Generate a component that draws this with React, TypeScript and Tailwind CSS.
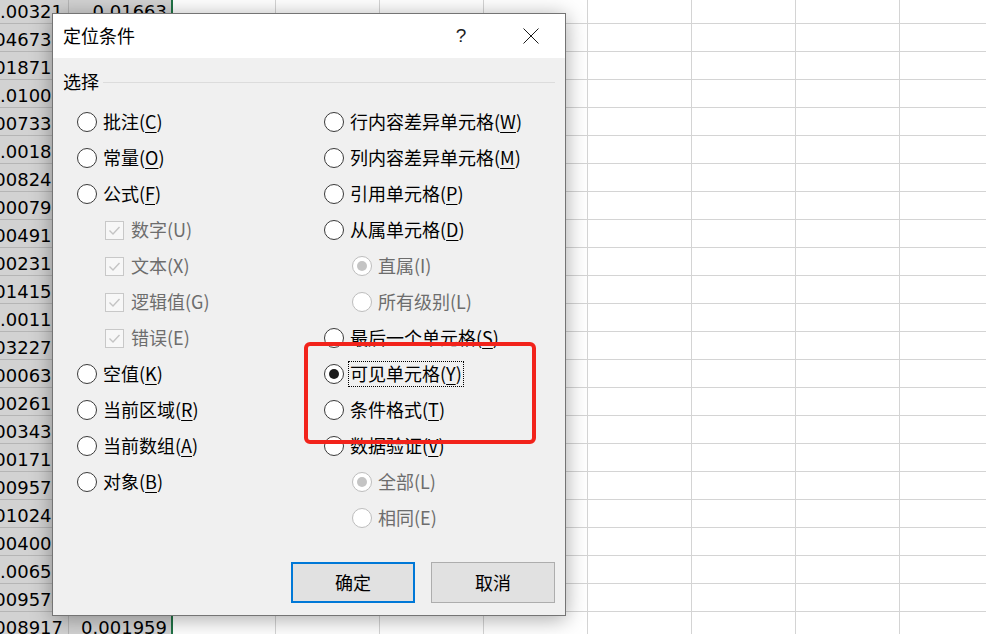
import React from "react";

// column A values (only the right part shows), column B only shows top/bottom rows
const colA = [
  "0.00321", "0.046731", "0.018712", "0.01004", "0.007331", "0.00186",
  "0.008242", "0.000794", "0.004912", "0.002318", "0.014157", "0.00112",
  "0.032271", "0.000631", "0.002615", "0.003433", "0.001719", "0.009572",
  "0.010248", "0.004006", "0.00653", "0.009574", "0.008917",
];
const colB: Record<number, string> = { 0: "0.01663", 22: "0.001959" };

const sheetFont = { fontFamily: '"DejaVu Sans", "Liberation Sans", sans-serif' };
const uiFont = { fontFamily: '"Noto Sans CJK SC", "Noto Sans", sans-serif' };

function Sheet() {
  return (
    <div className="-mt-[4px] flex flex-col text-[18px] text-black" style={sheetFont}>
      {colA.map((a, i) => (
        <div key={i} className="flex h-[28px] shrink-0">
          <div className="w-[69px] shrink-0 flex justify-end items-end overflow-hidden whitespace-nowrap border-r border-b border-[#b5b5b5] bg-[#d2d2d2] pr-[5px] leading-[22px]">
            {a}
          </div>
          <div className="w-[104px] shrink-0 flex justify-end items-end overflow-hidden whitespace-nowrap border-b border-[#b5b5b5] border-r-2 border-r-[#217346] bg-[#d2d2d2] pr-[4px] leading-[22px]">
            {colB[i] ?? ""}
          </div>
          <div className="w-[103px] shrink-0 border-r border-b border-[#d4d4d4]" />
          {[0, 1, 2, 3, 4, 5, 6].map((c) => (
            <div key={c} className="w-[104px] shrink-0 border-r border-b border-[#d4d4d4]" />
          ))}
        </div>
      ))}
    </div>
  );
}

type Item = {
  label: string;
  key?: string;
  kind: "radio" | "check";
  indent?: boolean;
  disabled?: boolean;
  checked?: boolean;
  focused?: boolean;
};

const leftItems: Item[] = [
  { label: "批注", key: "C", kind: "radio" },
  { label: "常量", key: "O", kind: "radio" },
  { label: "公式", key: "F", kind: "radio" },
  { label: "数字(U)", kind: "check", indent: true, disabled: true, checked: true },
  { label: "文本(X)", kind: "check", indent: true, disabled: true, checked: true },
  { label: "逻辑值(G)", kind: "check", indent: true, disabled: true, checked: true },
  { label: "错误(E)", kind: "check", indent: true, disabled: true, checked: true },
  { label: "空值", key: "K", kind: "radio" },
  { label: "当前区域", key: "R", kind: "radio" },
  { label: "当前数组", key: "A", kind: "radio" },
  { label: "对象", key: "B", kind: "radio" },
];

const rightItems: Item[] = [
  { label: "行内容差异单元格", key: "W", kind: "radio" },
  { label: "列内容差异单元格", key: "M", kind: "radio" },
  { label: "引用单元格", key: "P", kind: "radio" },
  { label: "从属单元格", key: "D", kind: "radio" },
  { label: "直属(I)", kind: "radio", indent: true, disabled: true, checked: true },
  { label: "所有级别(L)", kind: "radio", indent: true, disabled: true },
  { label: "最后一个单元格", key: "S", kind: "radio" },
  { label: "可见单元格", key: "Y", kind: "radio", checked: true, focused: true },
  { label: "条件格式", key: "T", kind: "radio" },
  { label: "数据验证", key: "V", kind: "radio" },
  { label: "全部(L)", kind: "radio", indent: true, disabled: true, checked: true },
  { label: "相同(E)", kind: "radio", indent: true, disabled: true },
];

function Radio({ checked, disabled }: { checked?: boolean; disabled?: boolean }) {
  return (
    <span
      className={
        "w-[20px] h-[20px] shrink-0 rounded-full bg-white flex items-center justify-center border " +
        (disabled ? "border-[#bdbdbd]" : "border-[#3a3a3a]")
      }
    >
      {checked && (
        <span className={"w-[10px] h-[10px] rounded-full " + (disabled ? "bg-[#c4c4c4]" : "bg-[#1b1b1b]")} />
      )}
    </span>
  );
}

function Check() {
  return (
    <span className="w-[19px] h-[19px] shrink-0 border border-[#c8c8c8] bg-[#f7f7f7] flex items-center justify-center">
      <svg width="15" height="15" viewBox="0 0 15 15">
        <path d="M2.5 7.5 L6 11 L12.5 4" fill="none" stroke="#c4c4c4" strokeWidth="1.4" />
      </svg>
    </span>
  );
}

function Row({ item }: { item: Item }) {
  return (
    <div className={"h-[36px] flex items-center " + (item.indent ? "pl-[28px]" : "")}>
      {item.kind === "radio" ? <Radio checked={item.checked} disabled={item.disabled} /> : <Check />}
      <span
        className={
          "h-[26px] flex items-center pb-[2px] px-[1px] border whitespace-nowrap " +
          (item.kind === "check" ? "ml-[5px] " : "ml-[4px] ") +
          (item.focused ? "border-dotted border-black " : "border-transparent ") +
          (item.disabled ? "text-[#6d6d6d]" : "text-black")
        }
      >
        {item.label}
        {item.key && (
          <>
            (<span className="underline underline-offset-[3px] decoration-1">{item.key}</span>)
          </>
        )}
      </span>
    </div>
  );
}

function Dialog() {
  return (
    <div
      className="absolute left-[52px] top-[13px] w-[514px] h-[603px] border border-[#747474] bg-[#f0f0f0] shadow-[0_3px_20px_rgba(0,0,0,0.35)] flex flex-col text-[18px] leading-none"
      style={uiFont}
    >
      <div className="h-[44px] shrink-0 bg-white flex items-center pb-[2px] pl-[10px] pr-[11px] text-black">
        <span>定位条件</span>
        <span className="ml-auto mr-[24px] w-[46px] flex justify-center text-[19px] text-[#222]" style={{ fontFamily: '"Liberation Sans", sans-serif' }}>
          ?
        </span>
        <span className="w-[46px] flex justify-center pt-[2px]">
          <svg width="16" height="16" viewBox="0 0 16 16">
            <path d="M0.5 0.5 L15.5 15.5 M15.5 0.5 L0.5 15.5" stroke="#1a1a1a" strokeWidth="1" />
          </svg>
        </span>
      </div>

      <div className="relative flex-1 flex flex-col px-[10px]">
        <div className="mt-[14px] h-[20px] flex items-center gap-[4px]">
          <span className="text-black pb-[2px]">选择</span>
          <span className="flex-1 h-px bg-[#dcdcdc]" />
        </div>

        <div className="mt-[12px] pl-[14px] flex">
          <div className="w-[247px] shrink-0 flex flex-col">
            {leftItems.map((it) => (
              <Row key={it.label} item={it} />
            ))}
          </div>
          <div className="flex-1 flex flex-col">
            {rightItems.map((it) => (
              <Row key={it.label} item={it} />
            ))}
          </div>
        </div>

        <div className="mt-auto mb-[12px] flex justify-end gap-[16px]">
          <button className="w-[124px] h-[41px] pb-[2px] border-2 border-[#0078d7] bg-[#e1e1e1] text-black">确定</button>
          <button className="w-[124px] h-[41px] pb-[2px] border border-[#adadad] bg-[#e1e1e1] text-black">取消</button>
        </div>

        {/* red highlight frame */}
        <div className="absolute left-[251px] top-[284px] w-[232px] h-[102px] border-4 border-[#f2231b] rounded-[6px] pointer-events-none" />
      </div>
    </div>
  );
}

export default function App() {
  return (
    <div className="relative w-[986px] h-[634px] overflow-hidden bg-white">
      <Sheet />
      <Dialog />
    </div>
  );
}
